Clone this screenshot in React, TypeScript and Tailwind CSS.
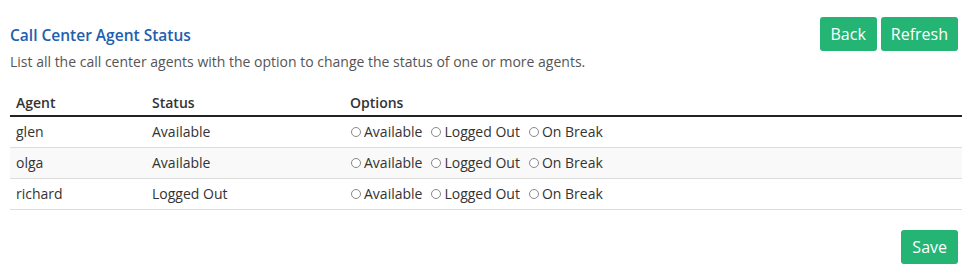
import React from 'react';

const agents = [
  { name: 'glen', status: 'Available' },
  { name: 'olga', status: 'Available' },
  { name: 'richard', status: 'Logged Out' },
];

const options = ['Available', 'Logged Out', 'On Break'];

export default function App() {
  return (
    <div
      className="w-[972px] h-[268px] bg-white px-[10px] pt-[17px] text-[14px] text-[#333]"
      style={{ fontFamily: '"Open Sans", sans-serif' }}
    >
      {/* header */}
      <div className="flex justify-between items-start">
        <div className="pt-[6px]">
          <h1 className="text-[15.5px] leading-[24px] font-semibold text-[#2160ad]">
            Call Center Agent Status
          </h1>
          <p className="mt-[5px] leading-[20px] text-[#555]">
            List all the call center agents with the option to change the status of one or more agents.
          </p>
        </div>
        <div className="flex gap-[4px] mr-[4px]">
          <button className="h-[34px] px-[11px] rounded-[3px] bg-[#24b574] text-white text-[16px]">
            Back
          </button>
          <button className="h-[34px] px-[10px] rounded-[3px] bg-[#24b574] text-white text-[16px]">
            Refresh
          </button>
        </div>
      </div>

      {/* table */}
      <table className="w-full mt-[19px] border-collapse">
        <thead>
          <tr className="border-b-2 border-[#222]">
            <th className="text-left font-semibold pl-[6px] py-[2px] leading-[20px] w-[136px]">Agent</th>
            <th className="text-left font-semibold pl-[6px] py-[2px] leading-[20px] w-[198px]">Status</th>
            <th className="text-left font-semibold pl-[6px] py-[2px] leading-[20px]">Options</th>
          </tr>
        </thead>
        <tbody>
          {agents.map((a, i) => (
            <tr key={a.name} className={`border-b border-[#ddd] ${i === 1 ? 'bg-[#f9f9f9]' : ''}`}>
              <td className="pl-[6px] py-[5px] leading-[20px]">{a.name}</td>
              <td className="pl-[6px] py-[5px] leading-[20px]">{a.status}</td>
              <td className="pl-[6px] py-[5px] leading-[20px]">
                <div className="flex items-center gap-[8px]">
                  {options.map((o) => (
                    <label key={o} className="flex items-center gap-[3px]">
                      <span className="inline-block ml-[1px] w-[10px] h-[10px] rounded-full border border-[#888] bg-white" />
                      <span>{o}</span>
                    </label>
                  ))}
                </div>
              </td>
            </tr>
          ))}
        </tbody>
      </table>

      <div className="flex justify-end mt-[20px] mr-[4px]">
        <button className="h-[34px] px-[11px] rounded-[3px] bg-[#24b574] text-white text-[16px]">
          Save
        </button>
      </div>
    </div>
  );
}
